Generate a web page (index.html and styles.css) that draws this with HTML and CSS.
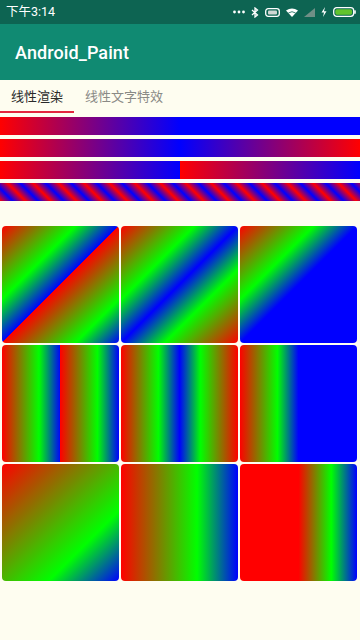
FILE: index.html
```html
<!DOCTYPE html>
<html lang="zh">
<head>
<meta charset="utf-8">
<title>Android_Paint</title>
<link rel="stylesheet" href="styles.css">
</head>
<body>
<div class="status">
  <span class="time">下午3:14</span>
  <div class="sicons">
    <svg class="ic" width="12" height="4" viewBox="0 0 12 4"><circle cx="1.5" cy="2" r="1.4" fill="#fff"/><circle cx="6" cy="2" r="1.4" fill="#fff"/><circle cx="10.5" cy="2" r="1.4" fill="#fff"/></svg>
    <svg class="ic" width="8" height="11" viewBox="0 0 8 11"><path d="M1 3 L6.5 8 L4 10 V1 L6.5 3 L1 8" fill="none" stroke="#fff" stroke-width="1.3"/></svg>
    <svg class="ic" width="15" height="9" viewBox="0 0 15 9"><rect x="0.7" y="0.7" width="13.6" height="7.6" rx="2.5" fill="none" stroke="#fff" stroke-width="1.3"/><rect x="3" y="2.6" width="9" height="3.8" rx="1" fill="#cfd8d4"/></svg>
    <svg class="ic" width="12" height="9" viewBox="0 0 12 9"><path d="M0 2.6 Q6 -1.8 12 2.6 L6 9 Z" fill="#fff"/><path d="M2.4 5 Q6 2.4 9.6 5" fill="none" stroke="#0d6452" stroke-width="0.8"/></svg>
    <svg class="ic" width="11" height="9" viewBox="0 0 11 9"><path d="M11 0 V9 H0 Z" fill="#6f8f86"/></svg>
    <svg class="ic" width="6" height="10" viewBox="0 0 6 10"><path d="M4 0 L0.5 5.5 H3 L2 10 L5.5 4.3 H3 Z" fill="#fff"/></svg>
    <svg class="ic" width="23" height="10" viewBox="0 0 23 10"><rect x="0.7" y="0.7" width="20" height="8.6" rx="3" fill="none" stroke="#fff" stroke-width="1.3"/><rect x="2.3" y="2.3" width="16.8" height="5.4" rx="1.6" fill="#62c32e"/><rect x="21.2" y="3.2" width="1.6" height="3.6" rx="0.6" fill="#fff"/></svg>
  </div>
</div>
<header class="appbar">
  <h1 class="title">Android_Paint</h1>
</header>
<nav class="tabs">
  <div class="tab active">线性渲染</div>
  <div class="tab">线性文字特效</div>
</nav>
<section class="bars">
  <div class="bar bar-clamp"></div>
  <div class="bar bar-mirror"></div>
  <div class="bar bar-repeat"></div>
  <div class="bar bar-stripes"></div>
</section>
<section class="grid">
  <div class="cell d-repeat"></div>
  <div class="cell d-mirror"></div>
  <div class="cell d-clamp"></div>
  <div class="cell h-repeat"></div>
  <div class="cell h-mirror"></div>
  <div class="cell h-clamp"></div>
  <div class="cell d-full"></div>
  <div class="cell h-full"></div>
  <div class="cell h-half"></div>
</section>
</body>
</html>
```

FILE: styles.css
```css
* { box-sizing: border-box; }

html, body {
  margin: 0;
  padding: 0;
}

body {
  width: 360px;
  height: 640px;
  background: #fefdf0;
  font-family: Roboto, "Noto Sans CJK SC", sans-serif;
  overflow: hidden;
}

.status {
  height: 24px;
  background: #0d6452;
  display: flex;
  align-items: center;
  justify-content: space-between;
  padding: 0 4px 0 6px;
}

.time {
  color: #fff;
  font-family: Roboto, "Noto Sans CJK SC", sans-serif;
  font-size: 12.5px;
  line-height: 1;
}

.sicons {
  display: flex;
  align-items: center;
  gap: 6px;
}

.ic { display: block; }

.appbar {
  height: 56px;
  background: #108a72;
  display: flex;
  align-items: center;
  padding-left: 15px;
}

.title {
  margin: 0;
  color: #fff;
  font-family: Roboto, sans-serif;
  font-weight: 500;
  font-size: 18px;
  letter-spacing: 0.1px;
}

.tabs {
  height: 33px;
  display: flex;
}

.tab {
  padding: 0 11px;
  display: flex;
  align-items: center;
  font-family: "Noto Sans CJK SC", sans-serif;
  font-size: 13px;
  color: #8a8a86;
  border-bottom: 2px solid transparent;
}

.tab.active {
  color: #2a2a2a;
  border-bottom-color: #e3263f;
}

.bars {
  display: flex;
  flex-direction: column;
  gap: 4px;
  padding-top: 4px;
}

.bar {
  height: 18px;
}

.bar-clamp {
  background: linear-gradient(90deg, #ff0000 0, #0000ff 180px, #0000ff 100%);
}

.bar-mirror {
  background: linear-gradient(90deg, #ff0000 0, #0000ff 50%, #ff0000 100%);
}

.bar-repeat {
  background: repeating-linear-gradient(90deg, #ff0000 0, #0000ff 180px);
}

.bar-stripes {
  background: repeating-linear-gradient(45deg, #ff0000 0, #0000ff 9px, #ff0000 18px);
}

.grid {
  display: grid;
  grid-template-columns: repeat(3, 117px);
  grid-auto-rows: 117px;
  gap: 2px;
  margin: 25px 0 0 2px;
}

.cell {
  border-radius: 4px;
}

.d-repeat {
  background: repeating-linear-gradient(135deg, #ff0000 0, #00ff00 52px, #0000ff 82.7px);
}

.d-mirror {
  background: linear-gradient(135deg, #ff0000 0, #00ff00 31.5%, #0000ff 50%, #00ff00 68.5%, #ff0000 100%);
}

.d-clamp {
  background: linear-gradient(135deg, #ff0000 0, #00ff00 31.5%, #0000ff 50%, #0000ff 100%);
}

.h-repeat {
  background: repeating-linear-gradient(90deg, #ff0000 0, #00ff00 37px, #0000ff 58.5px);
}

.h-mirror {
  background: linear-gradient(90deg, #ff0000 0, #00ff00 32%, #0000ff 50%, #00ff00 68%, #ff0000 100%);
}

.h-clamp {
  background: linear-gradient(90deg, #ff0000 0, #00ff00 32%, #0000ff 50%, #0000ff 100%);
}

.d-full {
  background: linear-gradient(135deg, #ff0000 0, #00ff00 70%, #0000ff 100%);
}

.h-full {
  background: linear-gradient(90deg, #ff0000 0, #00ff00 65%, #0000ff 100%);
}

.h-half {
  background: linear-gradient(90deg, #ff0000 0, #ff0000 50%, #00ff00 78%, #0000ff 100%);
}
```
